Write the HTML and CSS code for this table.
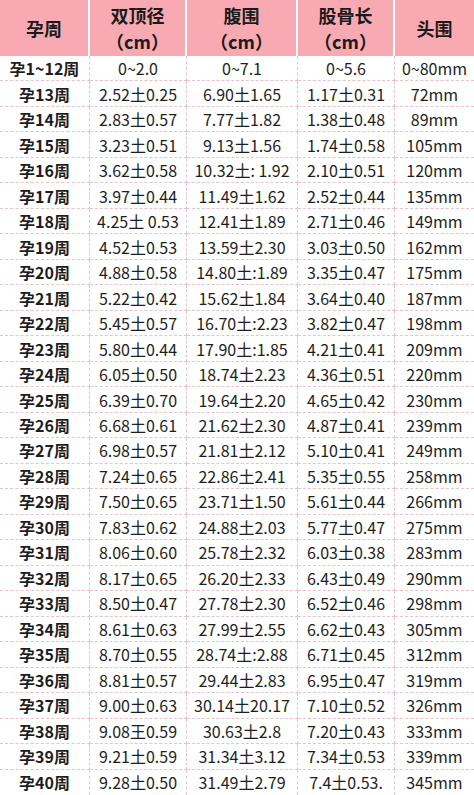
FILE: index.html
```html
<!DOCTYPE html>
<html lang="zh">
<head>
<meta charset="utf-8">
<link rel="stylesheet" href="styles.css">
</head>
<body>
<div class="chart">
<div class="h">孕周</div><div class="h">双顶径<br>（cm）</div><div class="h">腹围<br>（cm）</div><div class="h">股骨长<br>（cm）</div><div class="h">头围</div>
<div class="c wk">孕1~12周</div><div class="c">0~2.0</div><div class="c">0~7.1</div><div class="c">0~5.6</div><div class="c">0~80mm</div>
<div class="c wk">孕13周</div><div class="c">2.52土0.25</div><div class="c">6.90土1.65</div><div class="c">1.17土0.31</div><div class="c">72mm</div>
<div class="c wk">孕14周</div><div class="c">2.83土0.57</div><div class="c">7.77土1.82</div><div class="c">1.38土0.48</div><div class="c">89mm</div>
<div class="c wk">孕15周</div><div class="c">3.23土0.51</div><div class="c">9.13土1.56</div><div class="c">1.74土0.58</div><div class="c">105mm</div>
<div class="c wk">孕16周</div><div class="c">3.62土0.58</div><div class="c">10.32土: 1.92</div><div class="c">2.10土0.51</div><div class="c">120mm</div>
<div class="c wk">孕17周</div><div class="c">3.97土0.44</div><div class="c">11.49土1.62</div><div class="c">2.52土0.44</div><div class="c">135mm</div>
<div class="c wk">孕18周</div><div class="c">4.25土 0.53</div><div class="c">12.41土1.89</div><div class="c">2.71土0.46</div><div class="c">149mm</div>
<div class="c wk">孕19周</div><div class="c">4.52土0.53</div><div class="c">13.59土2.30</div><div class="c">3.03土0.50</div><div class="c">162mm</div>
<div class="c wk">孕20周</div><div class="c">4.88土0.58</div><div class="c">14.80土:1.89</div><div class="c">3.35土0.47</div><div class="c">175mm</div>
<div class="c wk">孕21周</div><div class="c">5.22土0.42</div><div class="c">15.62土1.84</div><div class="c">3.64土0.40</div><div class="c">187mm</div>
<div class="c wk">孕22周</div><div class="c">5.45土0.57</div><div class="c">16.70土:2.23</div><div class="c">3.82土0.47</div><div class="c">198mm</div>
<div class="c wk">孕23周</div><div class="c">5.80土0.44</div><div class="c">17.90土:1.85</div><div class="c">4.21土0.41</div><div class="c">209mm</div>
<div class="c wk">孕24周</div><div class="c">6.05土0.50</div><div class="c">18.74土2.23</div><div class="c">4.36土0.51</div><div class="c">220mm</div>
<div class="c wk">孕25周</div><div class="c">6.39土0.70</div><div class="c">19.64土2.20</div><div class="c">4.65土0.42</div><div class="c">230mm</div>
<div class="c wk">孕26周</div><div class="c">6.68土0.61</div><div class="c">21.62土2.30</div><div class="c">4.87土0.41</div><div class="c">239mm</div>
<div class="c wk">孕27周</div><div class="c">6.98土0.57</div><div class="c">21.81土2.12</div><div class="c">5.10土0.41</div><div class="c">249mm</div>
<div class="c wk">孕28周</div><div class="c">7.24土0.65</div><div class="c">22.86土2.41</div><div class="c">5.35土0.55</div><div class="c">258mm</div>
<div class="c wk">孕29周</div><div class="c">7.50土0.65</div><div class="c">23.71土1.50</div><div class="c">5.61土0.44</div><div class="c">266mm</div>
<div class="c wk">孕30周</div><div class="c">7.83土0.62</div><div class="c">24.88土2.03</div><div class="c">5.77土0.47</div><div class="c">275mm</div>
<div class="c wk">孕31周</div><div class="c">8.06土0.60</div><div class="c">25.78土2.32</div><div class="c">6.03土0.38</div><div class="c">283mm</div>
<div class="c wk">孕32周</div><div class="c">8.17土0.65</div><div class="c">26.20土2.33</div><div class="c">6.43土0.49</div><div class="c">290mm</div>
<div class="c wk">孕33周</div><div class="c">8.50土0.47</div><div class="c">27.78土2.30</div><div class="c">6.52土0.46</div><div class="c">298mm</div>
<div class="c wk">孕34周</div><div class="c">8.61土0.63</div><div class="c">27.99土2.55</div><div class="c">6.62土0.43</div><div class="c">305mm</div>
<div class="c wk">孕35周</div><div class="c">8.70土0.55</div><div class="c">28.74土:2.88</div><div class="c">6.71土0.45</div><div class="c">312mm</div>
<div class="c wk">孕36周</div><div class="c">8.81土0.57</div><div class="c">29.44土2.83</div><div class="c">6.95土0.47</div><div class="c">319mm</div>
<div class="c wk">孕37周</div><div class="c">9.00土0.63</div><div class="c">30.14土20.17</div><div class="c">7.10土0.52</div><div class="c">326mm</div>
<div class="c wk">孕38周</div><div class="c">9.08王0.59</div><div class="c">30.63土2.8</div><div class="c">7.20土0.43</div><div class="c">333mm</div>
<div class="c wk">孕39周</div><div class="c">9.21土0.59</div><div class="c">31.34土3.12</div><div class="c">7.34土0.53</div><div class="c">339mm</div>
<div class="c wk last">孕40周</div><div class="c last">9.28土0.50</div><div class="c last">31.49土2.79</div><div class="c last">7.4土0.53.</div><div class="c last">345mm</div>
</div>
</body>
</html>
```
FILE: styles.css
```css
html, body {
  margin: 0;
  padding: 0;
  background: #ffffff;
}
.chart {
  width: 474px;
  height: 795px;
  display: grid;
  grid-template-columns: 90px 97px 111px 97px 79px;
  grid-template-rows: 56px repeat(29, 1fr);
  font-family: "Noto Sans CJK SC", "Noto Sans", sans-serif;
  color: #1e1e1e;
  overflow: hidden;
}
.h {
  background: #f8a9b1;
  display: flex;
  align-items: center;
  justify-content: center;
  text-align: center;
  font-size: 18px;
  font-weight: 700;
  line-height: 26px;
  color: #1a1a1a;
  border-right: 2px solid #ffffff;
  box-sizing: border-box;
}
.h:nth-child(5) { border-right: none; }
.c {
  display: flex;
  align-items: center;
  justify-content: center;
  font-size: 16px;
  line-height: 20px;
  white-space: nowrap;
  box-sizing: border-box;
  border-right: 1px dashed #e6c3ca;
  border-bottom: 1px dashed #e6c3ca;
  min-height: 0;
}
.c:nth-child(5n) { border-right: none; }
.c.last { border-bottom: none; }
.c.wk {
  font-weight: 700;
}
```
